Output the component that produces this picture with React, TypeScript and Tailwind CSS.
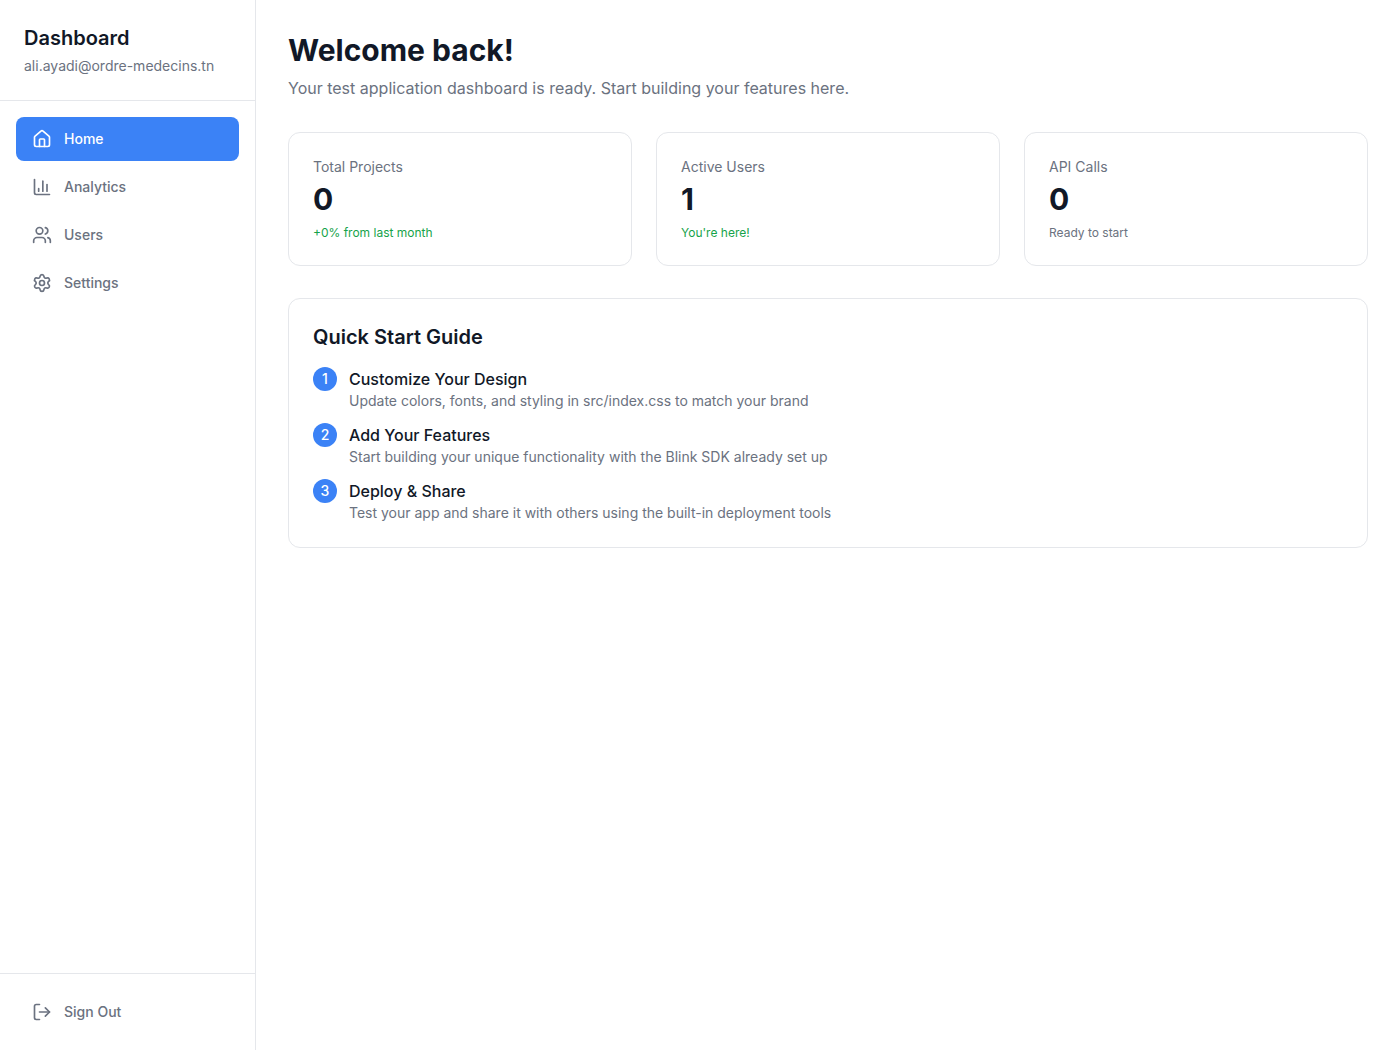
import { ChartColumn, Home, LogOut, Settings, Users } from 'lucide-react';

const navItems = [
  { label: 'Home', icon: Home, active: true },
  { label: 'Analytics', icon: ChartColumn },
  { label: 'Users', icon: Users },
  { label: 'Settings', icon: Settings },
];

const stats = [
  { label: 'Total Projects', value: '0', note: '+0% from last month', noteClass: 'text-[#16a34a]' },
  { label: 'Active Users', value: '1', note: "You're here!", noteClass: 'text-[#16a34a]' },
  { label: 'API Calls', value: '0', note: 'Ready to start', noteClass: 'text-[#6b7280]' },
];

const steps = [
  { title: 'Customize Your Design', text: 'Update colors, fonts, and styling in src/index.css to match your brand' },
  { title: 'Add Your Features', text: 'Start building your unique functionality with the Blink SDK already set up' },
  { title: 'Deploy & Share', text: 'Test your app and share it with others using the built-in deployment tools' },
];

export default function App() {
  return (
    <div className="flex h-[1050px] bg-white font-['Inter',sans-serif] text-[#111827] antialiased overflow-hidden">
      {/* Sidebar */}
      <aside className="w-64 flex-shrink-0 flex flex-col border-r border-[#e5e7eb]">
        <div className="p-6 border-b border-[#e5e7eb] h-[101px]">
          <h2 className="text-xl font-semibold leading-7">Dashboard</h2>
          <p className="text-sm text-[#6b7280] mt-1 leading-5">ali.ayadi@ordre-medecins.tn</p>
        </div>
        <nav className="flex-1 p-4 flex flex-col gap-1">
          {navItems.map((item) => (
            <a
              key={item.label}
              className={
                item.active
                  ? 'flex items-center gap-3 h-11 px-4 rounded-lg bg-[#3b82f6] text-white text-sm font-medium'
                  : 'flex items-center gap-3 h-11 px-4 rounded-lg text-[#6b7280] text-sm font-medium'
              }
            >
              <item.icon size={20} strokeWidth={2} />
              {item.label}
            </a>
          ))}
        </nav>
        <div className="p-4 border-t border-[#e5e7eb]">
          <a className="flex items-center gap-3 h-11 px-4 rounded-lg text-[#6b7280] text-sm font-medium">
            <LogOut size={20} strokeWidth={2} />
            Sign Out
          </a>
        </div>
      </aside>

      {/* Main */}
      <main className="flex-1 p-8">
        <h1 className="text-3xl font-bold leading-9">Welcome back!</h1>
        <p className="text-[#6b7280] mt-2 leading-6">
          Your test application dashboard is ready. Start building your features here.
        </p>

        <div className="grid grid-cols-3 gap-6 mt-8">
          {stats.map((stat) => (
            <div key={stat.label} className="border border-[#e5e7eb] rounded-xl p-6">
              <p className="text-sm text-[#6b7280] leading-5">{stat.label}</p>
              <p className="text-3xl font-bold leading-9 mt-1">{stat.value}</p>
              <p className={`text-xs leading-4 mt-2 ${stat.noteClass}`}>{stat.note}</p>
            </div>
          ))}
        </div>

        <section className="border border-[#e5e7eb] rounded-xl p-6 mt-8">
          <h3 className="text-xl font-semibold leading-7">Quick Start Guide</h3>
          <div className="mt-4 flex flex-col gap-3">
            {steps.map((step, i) => (
              <div key={step.title} className="flex items-start gap-3">
                <div className="w-6 h-6 rounded-full bg-[#3b82f6] text-white text-sm font-medium flex items-center justify-center">
                  {i + 1}
                </div>
                <div>
                  <p className="font-medium leading-6">{step.title}</p>
                  <p className="text-sm text-[#6b7280] leading-5">{step.text}</p>
                </div>
              </div>
            ))}
          </div>
        </section>
      </main>
    </div>
  );
}
